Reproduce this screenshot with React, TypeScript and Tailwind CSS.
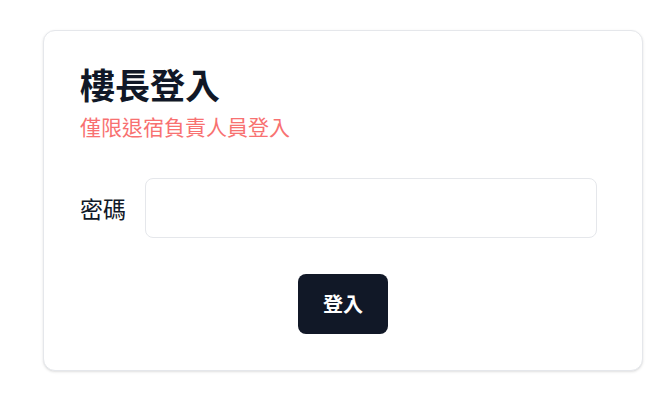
import React, { useState } from 'react';

const App: React.FC = () => {
  const [password, setPassword] = useState('');

  return (
    <div
      className="min-h-screen bg-white pt-[30px] pl-[43px] pr-[28px]"
      style={{ fontFamily: '"Noto Sans CJK TC", "Noto Sans", sans-serif' }}
    >
      <div className="w-[600px] rounded-xl border border-[#e5e7eb] bg-white p-9 shadow-sm">
        <h1 className="text-[35px] leading-[34px] font-bold text-[#111827]">樓長登入</h1>
        <p className="mt-[10px] text-[21px] leading-[30px] text-[#f87171]">僅限退宿負責人員登入</p>

        <div className="mt-[37px] flex items-center gap-[19px] pr-[9px]">
          <label className="text-[23px] leading-[30px] text-[#111827]">密碼</label>
          <input
            type="password"
            value={password}
            onChange={(e) => setPassword(e.target.value)}
            className="h-[60px] flex-1 rounded-lg border border-[#e5e7eb] bg-white px-4 text-lg outline-none"
          />
        </div>

        <div className="mt-9 flex justify-center">
          <button className="h-[60px] w-[90px] rounded-lg bg-[#111827] text-[20px] font-bold text-white">
            登入
          </button>
        </div>
      </div>
    </div>
  );
};

export default App;
